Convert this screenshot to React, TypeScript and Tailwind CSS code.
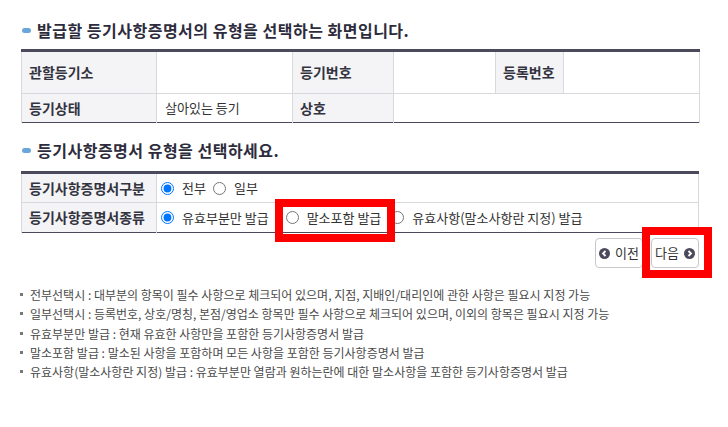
import React from 'react'

const font = { fontFamily: '"Noto Sans CJK KR", "Noto Sans", sans-serif' }

const Title = ({ text }: { text: string }) => (
    <h2 className="flex items-center h-[20px] text-[16px] font-semibold text-[#2d2c3d] tracking-[0.5px]">
        <span className="ml-[1px] mr-[6px] w-[9px] h-[5px] rounded-full bg-[#6aa6d9]" />
        {text}
    </h2>
)

const Radio = ({ label, checked, className }: { label: string, checked?: boolean, className?: string }) => (
    <label className={'flex items-center gap-x-[8px] ' + (className ?? '')}>
        <input type="radio" readOnly checked={!!checked} className="m-0 w-[13px] h-[13px]" />
        <span>{label}</span>
    </label>
)

const ArrowIcon = ({ dir }: { dir: 'left' | 'right' }) => (
    <svg width="11" height="11" viewBox="0 0 11 11">
        <circle cx="5.5" cy="5.5" r="5.5" fill="#4b4a5c" />
        {dir === 'left' ? (
            <path d="M6.5 3 L4 5.5 L6.5 8" stroke="#fff" strokeWidth="1.8" fill="none" />
        ) : (
            <path d="M4.5 3 L7 5.5 L4.5 8" stroke="#fff" strokeWidth="1.8" fill="none" />
        )}
    </svg>
)

const notes = [
    '전부선택시 : 대부분의 항목이 필수 사항으로 체크되어 있으며, 지점, 지배인/대리인에 관한 사항은 필요시 지정 가능',
    '일부선택시 : 등록번호, 상호/명칭, 본점/영업소 항목만 필수 사항으로 체크되어 있으며, 이외의 항목은 필요시 지정 가능',
    '유효부분만 발급 : 현재 유효한 사항만을 포함한 등기사항증명서 발급',
    '말소포함 발급 : 말소된 사항을 포함하며 모든 사항을 포함한 등기사항증명서 발급',
    '유효사항(말소사항란 지정) 발급 : 유효부분만 열람과 원하는란에 대한 말소사항을 포함한 등기사항증명서 발급',
]

const th = 'bg-[#f4f4f6] border border-[#d8d8dd] px-[7px] text-left text-[14px] font-bold text-[#333340]'
const td = 'border border-[#d8d8dd] px-[8px] text-[13px] text-[#333]'
const tdRadio = 'border border-[#d8d8dd] pl-[4px] pr-[8px] text-[13px] text-[#333]'

const App: React.FC = () => {
    return (
        <div className="relative w-[728px] h-[427px] bg-white" style={font}>
            <div className="pl-[21px] pt-[20px] w-[699px]">
                <Title text="발급할 등기사항증명서의 유형을 선택하는 화면입니다." />

                <table className="mt-[9px] w-[678px] border-collapse table-fixed border-t-[3px] border-t-[#4b4a5c] border-b border-b-[#4b4a5c]">
                    <colgroup>
                        <col className="w-[135px]" />
                        <col className="w-[136px]" />
                        <col className="w-[101px]" />
                        <col className="w-[102px]" />
                        <col className="w-[68px]" />
                        <col className="w-[136px]" />
                    </colgroup>
                    <tbody>
                        <tr className="h-[43px]">
                            <th className={th + ' border-t-0'}>관할등기소</th>
                            <td className={td + ' border-t-0'}></td>
                            <th className={th + ' border-t-0'}>등기번호</th>
                            <td className={td + ' border-t-0'}></td>
                            <th className={th + ' border-t-0'}>등록번호</th>
                            <td className={td + ' border-t-0'}></td>
                        </tr>
                        <tr className="h-[29px]">
                            <th className={th + ' border-b-0'}>등기상태</th>
                            <td className={td + ' border-b-0'}>살아있는 등기</td>
                            <th className={th + ' border-b-0'}>상호</th>
                            <td className={td + ' border-b-0'} colSpan={3}></td>
                        </tr>
                    </tbody>
                </table>

                <div className="mt-[17px]">
                    <Title text="등기사항증명서 유형을 선택하세요." />
                </div>

                <table className="mt-[11px] w-[678px] border-collapse table-fixed border-t-[3px] border-t-[#4b4a5c] border-b border-b-[#4b4a5c]">
                    <colgroup>
                        <col className="w-[135px]" />
                        <col />
                    </colgroup>
                    <tbody>
                        <tr className="h-[30px]">
                            <th className={th + ' border-t-0'}>등기사항증명서구분</th>
                            <td className={tdRadio + ' border-t-0'}>
                                <div className="flex items-center">
                                    <Radio label="전부" checked />
                                    <Radio label="일부" className="ml-[7px]" />
                                </div>
                            </td>
                        </tr>
                        <tr className="h-[30px]">
                            <th className={th + ' border-b-0'}>등기사항증명서종류</th>
                            <td className={tdRadio + ' border-b-0'}>
                                <div className="flex items-center">
                                    <Radio label="유효부분만 발급" checked />
                                    <Radio label="말소포함 발급" className="ml-[17px]" />
                                    <Radio label="유효사항(말소사항란 지정) 발급" className="ml-[10px]" />
                                </div>
                            </td>
                        </tr>
                    </tbody>
                </table>

                <div className="mt-[5px] flex justify-end gap-x-[8px]">
                    <button className="flex items-center justify-center gap-x-[5px] w-[48px] h-[30px] rounded-[4px] border border-[#c8c8cc] bg-white text-[13px] text-[#333]">
                        <ArrowIcon dir="left" />
                        이전
                    </button>
                    <button className="flex items-center justify-center gap-x-[5px] w-[48px] h-[30px] rounded-[4px] border border-[#c8c8cc] bg-white text-[13px] text-[#333]">
                        다음
                        <ArrowIcon dir="right" />
                    </button>
                </div>

                <ul className="mt-[17px] flex flex-col text-[12px] text-[#4a4a4a] leading-[19.3px]">
                    {notes.map((n, i) => (
                        <li key={i} className="flex items-center">
                            <span className="ml-[-1px] mr-[7px] w-[3px] h-[3px] bg-[#777]" />
                            {n}
                        </li>
                    ))}
                </ul>
            </div>

            <div className="absolute left-[275px] top-[199px] w-[120px] h-[43px] border-[8px] border-[#ff0000]" />
            <div className="absolute left-[642px] top-[227px] w-[70px] h-[51px] border-[8px] border-[#ff0000]" />
        </div>
    )
}

export default App
